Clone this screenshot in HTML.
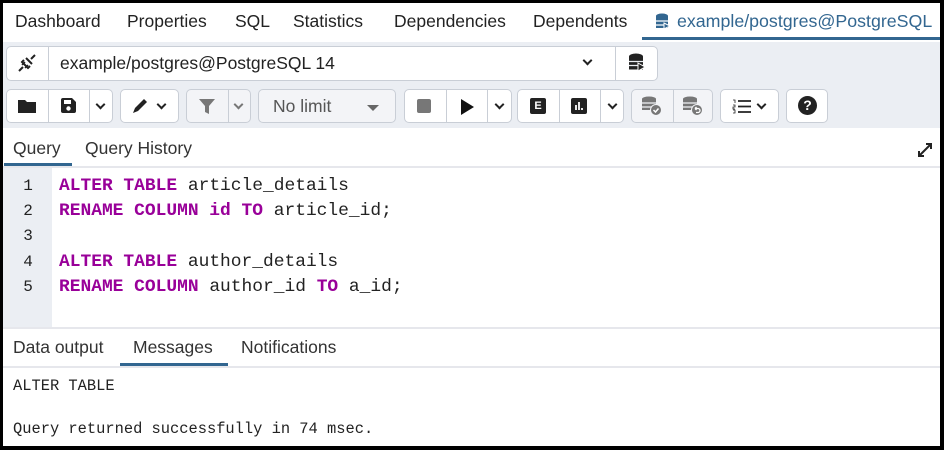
<!DOCTYPE html>
<html><head><meta charset="utf-8"><style>
*{margin:0;padding:0;box-sizing:border-box}
body{width:944px;height:450px;background:#000;position:relative;overflow:hidden;font-family:"Liberation Sans",sans-serif;color:#222}
#app{position:absolute;left:3px;top:3px;width:937px;height:443px;background:#fff;overflow:hidden}
.abs{position:absolute}
.t{position:absolute;font-size:17.5px;color:#222;white-space:nowrap}
.gray{background:#ebeef3}
.btn{position:absolute;top:86px;height:34px;background:#fff;border:1px solid #c9ced6;border-radius:5px;overflow:hidden}
.btn .c{position:absolute;top:0;bottom:0;border-left:1px solid #c9ced6}
.dis{background:#f3f4f7}
.chev{position:absolute;width:7px;height:7px;border-right:2px solid #222;border-bottom:2px solid #222;transform:rotate(45deg)}
.code{position:absolute;left:56px;font-size:17.9px;white-space:pre;color:#222;font-family:"Liberation Mono",monospace}
.k{color:#990099;font-weight:bold}
.ln{position:absolute;left:18px;width:14px;text-align:center;font-size:16px;color:#222;font-family:"Liberation Mono",monospace}
</style></head><body>
<div id="app">
 <div class="t" style="left:12px;top:8px">Dashboard</div>
 <div class="t" style="left:124px;top:8px">Properties</div>
 <div class="t" style="left:232px;top:8px">SQL</div>
 <div class="t" style="left:290px;top:8px">Statistics</div>
 <div class="t" style="left:391px;top:8px">Dependencies</div>
 <div class="t" style="left:530px;top:8px">Dependents</div>
 <svg class="abs" style="left:652px;top:10px" width="16" height="18" viewBox="0 0 16 18"><ellipse cx="7" cy="3" rx="6" ry="2.5" fill="#326690"/><rect x="1" y="3" width="12" height="12" fill="#326690"/><path d="M1 8h12M1 12h12" stroke="#fff" stroke-width="1.3"/><path d="M9 10l6 3-6 3z" fill="#326690" stroke="#fff" stroke-width="1"/></svg>
 <div class="t" style="left:674px;top:8px;color:#326690;font-size:17.8px">example/postgres@PostgreSQL</div>
 <div class="abs" style="left:639px;top:34px;width:298px;height:3px;background:#326690"></div>
 <div class="abs gray" style="left:0;top:39px;width:937px;height:86px"></div>
 <div class="abs" style="left:3px;top:43px;width:652px;height:35px;background:#fff;border:1px solid #c9ced6;border-radius:5px"></div>
 <div class="abs" style="left:45px;top:43px;width:1px;height:35px;background:#c9ced6"></div>
 <div class="abs" style="left:612px;top:43px;width:1px;height:35px;background:#c9ced6"></div>
 <svg class="abs" style="left:14px;top:50px" width="20" height="20" viewBox="0 0 20 20"><path d="M2 18l4-4M14 6l4-4M5 9l6 6M9 5l6 6M7 7l-2 2 3 3M13 13l-2 2-3-3" stroke="#222" stroke-width="2" fill="none"/><path d="M5 12l3-3M8 15l3-3" stroke="#222" stroke-width="1.5"/></svg>
 <div class="t" style="left:57px;top:50px">example/postgres@PostgreSQL 14</div>
 <div class="chev" style="left:581px;top:54px"></div>
 <svg class="abs" style="left:625px;top:50px" width="18" height="20" viewBox="0 0 18 20"><ellipse cx="8" cy="3.5" rx="7" ry="3" fill="#222"/><rect x="1" y="3.5" width="14" height="13" fill="#222"/><path d="M1 8.5h14M1 12.5h14" stroke="#ebeef3" stroke-width="1.3"/><path d="M10 10l7 4-7 4z" fill="#222" stroke="#fff" stroke-width="1"/></svg>
 <div class="btn" style="left:3px;width:107px"><div class="c" style="left:41px"></div><div class="c" style="left:82px"></div></div>
 <svg class="abs" style="left:14px;top:95px" width="20" height="16" viewBox="0 0 20 16"><path d="M1 2h7l2 2h9v11H1z" fill="#222"/></svg>
 <svg class="abs" style="left:57px;top:94px" width="17" height="17" viewBox="0 0 17 17"><path d="M1 3a2 2 0 0 1 2-2h9l4 4v9a2 2 0 0 1-2 2H3a2 2 0 0 1-2-2z" fill="#222"/><rect x="4" y="3" width="7" height="4" fill="#fff"/><circle cx="8.5" cy="11.5" r="2.2" fill="#fff"/></svg>
 <div class="chev" style="left:94px;top:98px"></div>
 <div class="btn" style="left:117px;width:59px"></div>
 <svg class="abs" style="left:128px;top:94px" width="20" height="18" viewBox="0 0 20 18"><path d="M2 16l2-5 9-9 3 3-9 9z" fill="#222"/></svg>
 <div class="chev" style="left:155px;top:98px"></div>
 <div class="btn dis" style="left:183px;width:65px"><div class="c" style="left:41px"></div></div>
 <svg class="abs" style="left:195px;top:95px" width="18" height="17" viewBox="0 0 18 17"><path d="M1 1h16l-6 7v8l-4-2V8z" fill="#777"/></svg>
 <div class="chev" style="left:232px;top:98px;border-color:#777"></div>
 <div class="btn dis" style="left:255px;width:138px"></div>
 <div class="t" style="left:270px;top:93px;color:#555">No limit</div>
 <div class="abs" style="left:364px;top:102px;width:0;height:0;border-left:6px solid transparent;border-right:6px solid transparent;border-top:6px solid #666"></div>
 <div class="btn" style="left:401px;width:108px"><div class="c" style="left:41px"></div><div class="c" style="left:82px"></div></div>
 <div class="abs" style="left:414px;top:96px;width:14px;height:14px;background:#777;border-radius:2px"></div>
 <div class="abs" style="left:458px;top:96px;width:0;height:0;border-top:8px solid transparent;border-bottom:8px solid transparent;border-left:13px solid #111"></div>
 <div class="chev" style="left:493px;top:98px"></div>
 <div class="btn" style="left:514px;width:107px"><div class="c" style="left:41px"></div><div class="c" style="left:82px"></div></div>
 <div class="abs" style="left:527px;top:95px;width:16px;height:16px;background:#222;border-radius:2px;color:#fff;font-size:11px;font-weight:bold;text-align:center;line-height:16px">E</div>
 <svg class="abs" style="left:568px;top:95px" width="16" height="16" viewBox="0 0 16 16"><rect width="16" height="16" rx="2" fill="#222"/><path d="M5 12V7M8 12V4M11 12v-2" stroke="#fff" stroke-width="1.8"/></svg>
 <div class="chev" style="left:606px;top:98px"></div>
 <div class="btn dis" style="left:628px;width:82px"><div class="c" style="left:41px"></div></div>
 <svg class="abs" style="left:638px;top:93px" width="22" height="20" viewBox="0 0 22 20"><ellipse cx="8" cy="3" rx="7" ry="2.5" fill="#777"/><rect x="1" y="3" width="14" height="11" fill="#777"/><path d="M1 7h14M1 11h14" stroke="#f3f4f7" stroke-width="1.2"/><circle cx="15" cy="14" r="5.5" fill="#777" stroke="#f3f4f7"/><path d="M12.5 14l2 2 3-3.5" stroke="#fff" stroke-width="1.5" fill="none"/></svg>
 <svg class="abs" style="left:679px;top:93px" width="22" height="20" viewBox="0 0 22 20"><ellipse cx="8" cy="3" rx="7" ry="2.5" fill="#777"/><rect x="1" y="3" width="14" height="11" fill="#777"/><path d="M1 7h14M1 11h14" stroke="#f3f4f7" stroke-width="1.2"/><circle cx="15" cy="14" r="5.5" fill="#777" stroke="#f3f4f7"/><path d="M13 12.5h3a2 2 0 0 1 0 4h-2M13 12.5l1.5-1.5M13 12.5l1.5 1.5" stroke="#fff" stroke-width="1.3" fill="none"/></svg>
 <div class="btn" style="left:717px;width:59px"></div>
 <svg class="abs" style="left:729px;top:96px" width="20" height="15" viewBox="0 0 20 15"><path d="M6 2h13M6 7.5h13M6 13h13" stroke="#222" stroke-width="1.8"/><path d="M1 1h2v3M1 6h2v2H1v2h2M1 11h2v3H1" stroke="#222" stroke-width="0.8" fill="none"/></svg>
 <div class="chev" style="left:755px;top:98px"></div>
 <div class="btn" style="left:783px;width:42px"></div>
 <div class="abs" style="left:795px;top:93px;width:19px;height:19px;border-radius:50%;background:#222;color:#fff;font-weight:bold;font-size:14px;text-align:center;line-height:19px">?</div>
 <div class="t" style="left:10px;top:135px;color:#333">Query</div>
 <div class="t" style="left:82px;top:135px;color:#333">Query History</div>
 <div class="abs" style="left:1px;top:160px;width:68px;height:3px;background:#326690"></div>
 <div class="abs" style="left:0;top:163px;width:937px;height:2px;background:#e6e7ec"></div>
 <svg class="abs" style="left:913px;top:138px" width="18" height="18" viewBox="0 0 18 18"><path d="M3 15L15 3M10 3h5v5M3 10v5h5" stroke="#222" stroke-width="2" fill="none"/></svg>
 <div class="abs gray" style="left:0;top:165px;width:49px;height:160px"></div>
 <div class="ln" style="top:174px">1</div>
 <div class="ln" style="top:199px">2</div>
 <div class="ln" style="top:224px">3</div>
 <div class="ln" style="top:250px">4</div>
 <div class="ln" style="top:275px">5</div>
 <div class="code" style="top:173px"><span class="k">ALTER TABLE</span> article_details</div>
 <div class="code" style="top:198px"><span class="k">RENAME COLUMN id TO</span> article_id;</div>
 <div class="code" style="top:249px"><span class="k">ALTER TABLE</span> author_details</div>
 <div class="code" style="top:274px"><span class="k">RENAME COLUMN</span> author_id <span class="k">TO</span> a_id;</div>
 <div class="abs" style="left:0;top:324px;width:937px;height:2px;background:#e6e7ec"></div>
 <div class="t" style="left:10px;top:334px;color:#333">Data output</div>
 <div class="t" style="left:130px;top:334px;color:#333">Messages</div>
 <div class="t" style="left:238px;top:334px;color:#333">Notifications</div>
 <div class="abs" style="left:117px;top:360px;width:108px;height:3px;background:#326690"></div>
 <div class="abs" style="left:0;top:363px;width:937px;height:2px;background:#e6e7ec"></div>
 <div class="abs" style="left:10px;top:374px;color:#222;white-space:pre;font-family:'Liberation Mono',monospace;font-size:15.4px">ALTER TABLE</div>
 <div class="abs" style="left:10px;top:417px;color:#222;white-space:pre;font-family:'Liberation Mono',monospace;font-size:15.4px">Query returned successfully in 74 msec.</div>
</div>
</body></html>
